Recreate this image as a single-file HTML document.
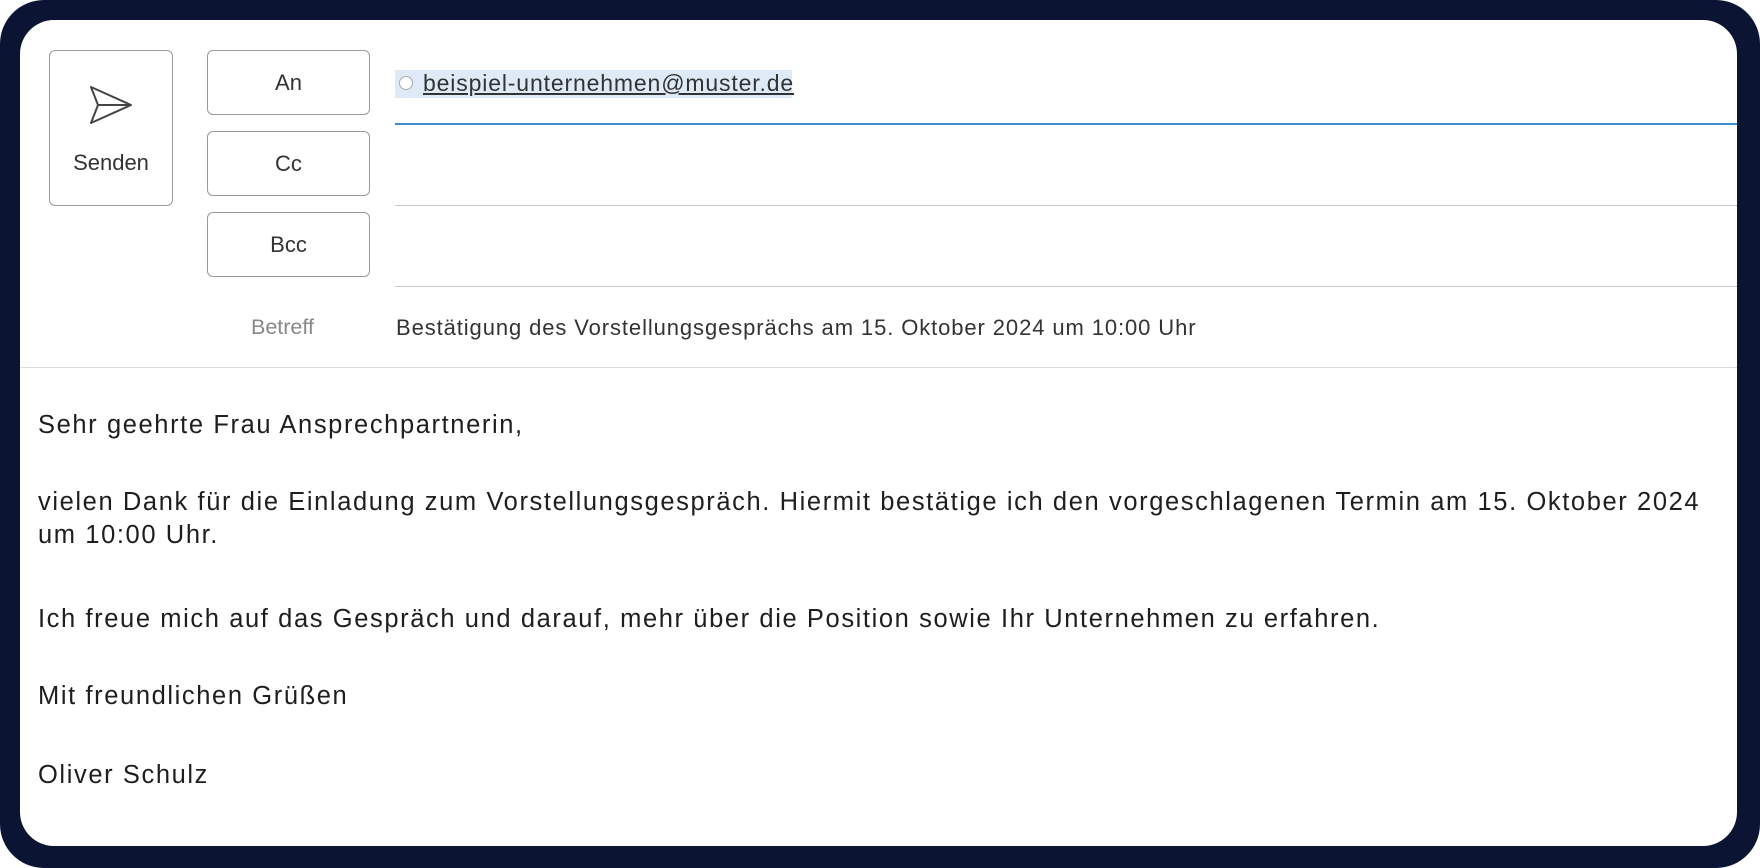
<!DOCTYPE html>
<html><head><meta charset="utf-8"><style>
html,body{margin:0;padding:0;width:1760px;height:868px;overflow:hidden;background:#fff}
body{font-family:"Liberation Sans",sans-serif;color:#222}
.frame{position:absolute;left:0;top:0;width:1760px;height:868px;background:#0b1533;border-radius:44px}
.inner{position:absolute;left:20px;top:20px;width:1717px;height:826px;background:#fff;border-radius:34px;overflow:hidden}
.btn{position:absolute;border:1px solid #9a9a9a;border-radius:6px;background:#fff;box-sizing:border-box;display:flex;align-items:center;justify-content:center;font-size:22px;color:#333}
.line{position:absolute;height:1px;background:#c8c8c8}
.abs{position:absolute;white-space:nowrap}
.body p{position:absolute;left:18px;margin:0;font-size:25.5px;letter-spacing:1.6px;color:#1e1e1e;white-space:nowrap;line-height:1}
</style></head><body>
<div class="frame"></div>
<div class="inner">
 <div class="btn" style="left:29px;top:30px;width:124px;height:156px;flex-direction:column">
  <svg width="46" height="42" viewBox="0 0 46 42" style="margin-top:4px"><path d="M3 3 L43 21 L3 39 L10 21 Z M10 21 L43 21" fill="none" stroke="#444" stroke-width="2" stroke-linejoin="round"/></svg>
  <div style="margin-top:24px">Senden</div>
 </div>
 <div class="btn" style="left:187px;top:30px;width:163px;height:65px">An</div>
 <div class="btn" style="left:187px;top:111px;width:163px;height:65px">Cc</div>
 <div class="btn" style="left:187px;top:192px;width:163px;height:65px">Bcc</div>
 <div class="abs" style="left:375px;top:50px;width:397px;height:28px;background:#deeaf6"></div>
 <div class="abs" style="left:379px;top:56px;width:14px;height:14px;border:1px solid #aaa;border-radius:50%;box-sizing:border-box;background:#fff"></div>
 <div class="abs" style="left:403px;top:50px;font-size:23px;letter-spacing:0.85px;color:#333;text-decoration:underline">beispiel-unternehmen@muster.de</div>
 <div class="line" style="left:375px;top:103px;right:0;height:2px;background:#3a8fcf"></div>
 <div class="line" style="left:375px;top:185px;right:0"></div>
 <div class="line" style="left:375px;top:266px;right:0"></div>
 <div class="abs" style="left:231px;top:295px;font-size:21.5px;color:#888">Betreff</div>
 <div class="abs" style="left:376px;top:295px;font-size:22px;letter-spacing:0.9px;color:#333">Bestätigung des Vorstellungsgesprächs am 15. Oktober 2024 um 10:00 Uhr</div>
 <div class="line" style="left:0;top:347px;right:0;background:#ddd"></div>
 <div class="body">
  <p style="top:393px">Sehr geehrte Frau Ansprechpartnerin,</p>
  <p style="top:470px">vielen Dank für die Einladung zum Vorstellungsgespräch. Hiermit bestätige ich den vorgeschlagenen Termin am 15. Oktober 2024</p>
  <p style="top:503px">um 10:00 Uhr.</p>
  <p style="top:587px">Ich freue mich auf das Gespräch und darauf, mehr über die Position sowie Ihr Unternehmen zu erfahren.</p>
  <p style="top:664px">Mit freundlichen Grüßen</p>
  <p style="top:743px">Oliver Schulz</p>
 </div>
</div>
</body></html>
